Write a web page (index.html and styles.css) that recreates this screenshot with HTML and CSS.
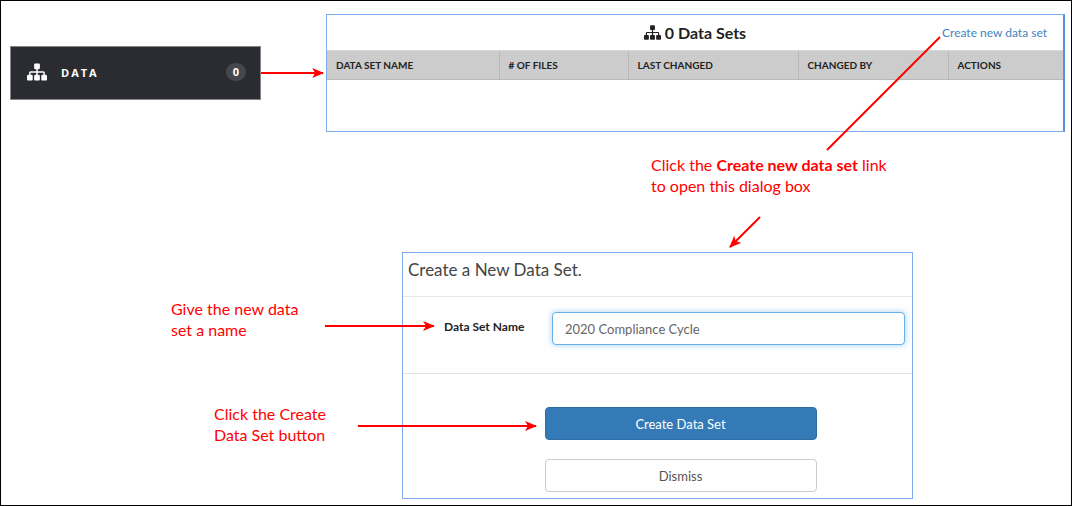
FILE: index.html
```
<!DOCTYPE html>
<html lang="en">
<head>
    <meta charset="UTF-8">
    <meta name="viewport" content="width=device-width, initial-scale=1.0">
    <title>Create a new data set</title>
    <link rel="stylesheet" href="styles.css">
</head>
<body>
    <svg class="defs" aria-hidden="true">
        <symbol id="sitemap" viewBox="0 128 1792 1536">
            <path d="M1792 1248v320q0 40-28 68t-68 28h-320q-40 0-68-28t-28-68v-320q0-40 28-68t68-28h96v-192h-512v192h96q40 0 68 28t28 68v320q0 40-28 68t-68 28h-320q-40 0-68-28t-28-68v-320q0-40 28-68t68-28h96v-192h-512v192h96q40 0 68 28t28 68v320q0 40-28 68t-68 28h-320q-40 0-68-28t-28-68v-320q0-40 28-68t68-28h96v-192q0-52 38-90t90-38h512v-192h-96q-40 0-68-28t-28-68v-320q0-40 28-68t68-28h320q40 0 68 28t28 68v320q0 40-28 68t-68 28h-96v192h512q52 0 90 38t38 90v192h96q40 0 68 28t28 68z"/>
        </symbol>
        <marker id="head" viewBox="0 0 12 10" refX="11" refY="5" markerWidth="12" markerHeight="10" markerUnits="userSpaceOnUse" orient="auto">
            <path d="M0 0 L12 5 L0 10 L3 5 Z" fill="#f00" stroke="none"/>
        </marker>
    </svg>

    <main class="guide">
        <div class="overview">
            <a href="#" class="nav-item">
                <svg class="nav-icon" aria-hidden="true"><use href="#sitemap"/></svg>
                <span class="nav-label">DATA</span>
                <span class="nav-count">0</span>
            </a>
            <svg class="arrow arrow-nav" viewBox="0 0 66 12" aria-hidden="true">
                <line x1="0" y1="6" x2="63" y2="6" marker-end="url(#head)"/>
            </svg>

            <section class="panel">
                <header class="panel-header">
                    <h1><svg class="title-icon" aria-hidden="true"><use href="#sitemap"/></svg>0 Data Sets</h1>
                    <a href="#" class="create-link">Create new data set</a>
                </header>
                <table class="data-table">
                    <thead>
                        <tr>
                            <th class="col-name">Data Set Name</th>
                            <th class="col-files"># of Files</th>
                            <th class="col-changed">Last Changed</th>
                            <th class="col-by">Changed By</th>
                            <th>Actions</th>
                        </tr>
                    </thead>
                </table>
                <svg class="arrow link-line" viewBox="0 0 118 118" aria-hidden="true">
                    <line x1="114" y1="2" x2="1" y2="115"/>
                </svg>
            </section>
        </div>

        <div class="callout">
            <p class="note">Click the <strong>Create new data set</strong> link<br>to open this dialog box</p>
            <svg class="arrow arrow-dialog" viewBox="0 0 36 34" aria-hidden="true">
                <line x1="32" y1="1" x2="2" y2="31" marker-end="url(#head)"/>
            </svg>
        </div>

        <div class="create-step">
            <div class="notes">
                <div class="note-row">
                    <p class="note">Give the new data<br>set a name</p>
                    <svg class="arrow arrow-name" viewBox="0 0 112 12" aria-hidden="true">
                        <line x1="0" y1="6" x2="109" y2="6" marker-end="url(#head)"/>
                    </svg>
                </div>
                <div class="note-row note-row-button">
                    <p class="note">Click the Create<br>Data Set button</p>
                    <svg class="arrow arrow-button" viewBox="0 0 180 12" aria-hidden="true">
                        <line x1="0" y1="6" x2="178" y2="6" marker-end="url(#head)"/>
                    </svg>
                </div>
            </div>

            <form class="dialog">
                <h2 class="dialog-title">Create a New Data Set.</h2>
                <div class="dialog-body">
                    <label for="set-name">Data Set Name</label>
                    <input type="text" id="set-name" value="2020 Compliance Cycle">
                </div>
                <div class="dialog-footer">
                    <button type="submit" class="btn btn-primary">Create Data Set</button>
                    <button type="button" class="btn">Dismiss</button>
                </div>
            </form>
        </div>
    </main>
</body>
</html>
```
FILE: styles.css
```
:root {
    --frame: #7eaaf0;
    --red: #f00;
    --text: #222;
    --text-medium: #555;
    --blue: #337ab7;
}

*,
*::before,
*::after {
    box-sizing: border-box;
}

body,
h1,
h2,
p {
    margin: 0;
}

body {
    font-family: Lato, "Open Sans", sans-serif;
    font-size: 13px;
    color: var(--text);
    background: #fff;
}

.defs {
    position: absolute;
    width: 0;
    height: 0;
}

.guide {
    min-height: 100vh;
    padding: 13px 6px 6px 9px;
    border: 1px solid #000;
}

/* Sidebar item and data set list */
.overview {
    display: flex;
    align-items: center;
}

.nav-item {
    display: flex;
    align-items: center;
    width: 251px;
    height: 54px;
    padding: 0 14px 2px 16px;
    border: 1px solid #85868a;
    background: #2b2c31;
    color: #fff;
    font-family: "Open Sans", sans-serif;
    font-size: 11px;
    font-weight: 700;
    text-decoration: none;
}

.nav-icon {
    width: 20px;
    height: 18px;
    margin-right: 14px;
    fill: #fff;
}

.nav-label {
    flex: 1;
    letter-spacing: 2px;
}

.nav-count {
    width: 20px;
    border-radius: 9px;
    background: #47484d;
    line-height: 18px;
    text-align: center;
}

.arrow {
    display: block;
    overflow: visible;
    fill: none;
    stroke: var(--red);
    stroke-width: 2px;
}

.arrow-nav {
    width: 65px;
    height: 12px;
}

.panel {
    position: relative;
    flex: 1;
    height: 118px;
    border: 1px solid var(--frame);
    border-right: 2px solid #5b8fe0;
}

.panel-header {
    position: relative;
    display: flex;
    align-items: center;
    justify-content: center;
    height: 35px;
}

.panel-header h1 {
    display: flex;
    align-items: center;
    gap: 4px;
    font-size: 16px;
    font-weight: 700;
}

.title-icon {
    width: 17px;
    height: 15px;
    fill: var(--text);
}

.create-link {
    position: absolute;
    right: 16px;
    color: #4285c0;
    font-size: 12px;
    text-decoration: none;
}

.data-table {
    width: 100%;
    table-layout: fixed;
    border-collapse: collapse;
}

.data-table th {
    height: 29px;
    padding: 0 9px;
    border: solid #b8b8b8;
    border-width: 1px 0 1px 1px;
    border-top-color: #d8d8d8;
    background: #ccc;
    font-size: 10px;
    text-align: left;
    text-transform: uppercase;
    white-space: nowrap;
}

.data-table th:first-child {
    border-left: 0;
}

.data-table .col-name {
    width: 172px;
}

.data-table .col-files {
    width: 129px;
}

.data-table .col-changed {
    width: 170px;
}

.data-table .col-by {
    width: 150px;
}

.link-line {
    position: absolute;
    top: 20px;
    right: 119px;
    width: 118px;
    height: 118px;
}

/* Red annotations */
.note {
    color: var(--red);
    font-size: 16px;
    line-height: 21px;
}

.callout {
    width: 414px;
    margin-top: 22px;
    margin-left: auto;
}

.arrow-dialog {
    width: 36px;
    height: 34px;
    margin: 20px 0 2px 77px;
}

.create-step {
    display: grid;
    grid-template-columns: 1fr 511px 152px;
}

.notes {
    display: flex;
    flex-direction: column;
    align-items: flex-end;
    gap: 63px;
    padding-top: 46px;
}

.note-row {
    position: relative;
    width: 231px;
}

.note-row-button {
    width: 188px;
}

.arrow-name,
.arrow-button {
    position: absolute;
    height: 12px;
}

.arrow-name {
    top: 22px;
    left: 154px;
    width: 112px;
}

.arrow-button {
    top: 17px;
    left: 144px;
    width: 180px;
}

/* Dialog */
.dialog {
    border: 1px solid var(--frame);
    color: var(--text-medium);
}

.dialog-title {
    padding: 6px 5px 15px;
    border-bottom: 1px solid #e8e8e8;
    color: #444;
    font-size: 17px;
    font-weight: 400;
    line-height: 22px;
}

.dialog-body {
    display: flex;
    align-items: flex-start;
    padding: 15px 7px 28px 41px;
    border-bottom: 1px solid #e3e3e3;
}

.dialog-body label {
    width: 108px;
    color: var(--text);
    font-size: 12px;
    font-weight: 700;
    line-height: 30px;
}

.dialog-body input {
    flex: 1;
    min-width: 0;
    height: 33px;
    padding: 0 12px;
    border: 1px solid #66afe9;
    border-radius: 4px;
    outline: 0;
    box-shadow: 0 0 6px rgba(102, 175, 233, 0.6);
    color: #666;
    font: inherit;
}

.dialog-footer {
    display: flex;
    flex-direction: column;
    align-items: center;
    gap: 19px;
    padding: 33px 0 6px 46px;
}

.btn {
    width: 272px;
    height: 33px;
    border: 1px solid #ccc;
    border-radius: 4px;
    background: #fff;
    color: var(--text-medium);
    font: inherit;
}

.btn-primary {
    border-color: #2e6da4;
    background: var(--blue);
    color: #fff;
}
```
